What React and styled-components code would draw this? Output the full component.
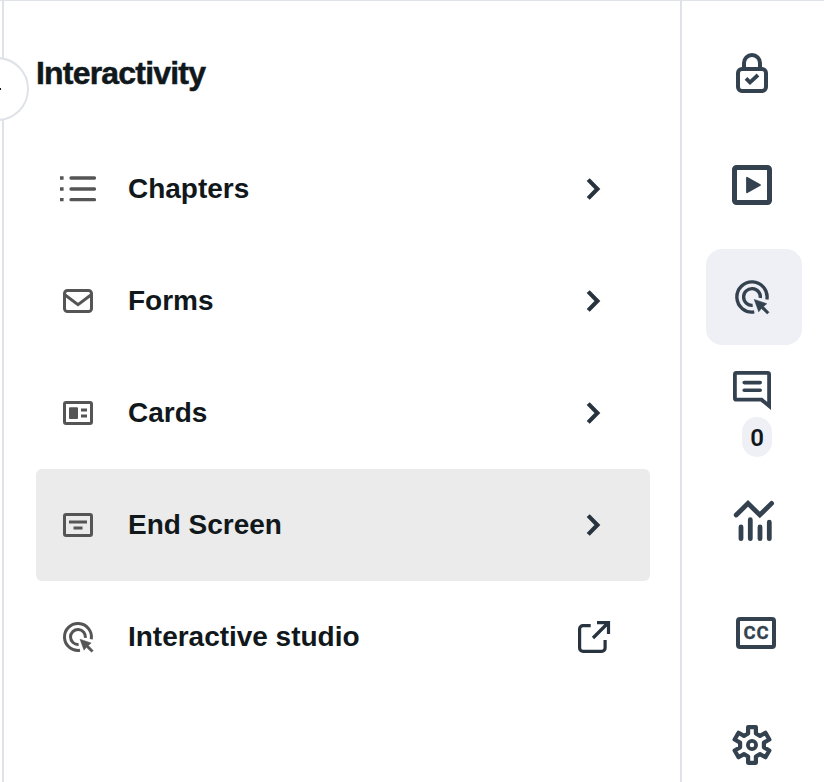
import React from "react";
import styled, { createGlobalStyle } from "styled-components";

const GlobalStyle = createGlobalStyle`
  * {
    box-sizing: border-box;
  }

  body {
    margin: 0;
    background-color: #ffffff;
    font-family: "Liberation Sans", Arial, sans-serif;
    color: #11181c;
  }
`;

const Container = styled.div`
  position: relative;
  width: 100vw;
  height: 100vh;
  padding-left: 2px;
  display: flex;
  overflow: hidden;
  border-top: 1px solid #dfe3e8;
  background-color: #ffffff;
`;

const Panel = styled.main`
  flex: 1;
  padding: 54px 30px 0 32px;
  border-left: 2px solid #dfe3e8;
  border-right: 2px solid #dfe3e8;
`;

const Title = styled.h1`
  height: 36px;
  margin: 0 0 42px;
  font-size: 32px;
  font-weight: 700;
  line-height: 36px;
  letter-spacing: -0.8px;
  -webkit-text-stroke: 0.5px #11181c;
`;

const Row = styled.div`
  height: 112px;
  padding: 0 32px 0 18px;
  display: flex;
  align-items: center;
  border-radius: 6px;
  cursor: pointer;
  background-color: ${(props) => (props.$active ? "#ebebeb" : "transparent")};
`;

const Label = styled.span`
  flex: 1;
  margin-left: 26px;
  font-size: 28px;
  font-weight: 700;
  line-height: 32px;
  letter-spacing: -0.02px;
`;

const Icon = styled.svg.attrs({ viewBox: "0 0 48 48", fill: "none" })`
  width: 48px;
  height: 48px;
  flex-shrink: 0;
  display: block;
  overflow: visible;
  color: ${(props) => props.$color || "#344250"};
  stroke: currentColor;
`;

const Sidebar = styled.nav`
  width: 142px;
  padding: 24px 22px 0 24px;
  display: flex;
  flex-direction: column;
  gap: 16px;
`;

const Tool = styled.div`
  height: 96px;
  padding: ${(props) => (props.$top ? "4px" : "24px")} 22px 0;
  flex-shrink: 0;
  border-radius: 16px;
  cursor: pointer;
  background-color: ${(props) => (props.$active ? "#eff0f5" : "transparent")};
`;

const Badge = styled.div`
  width: 30px;
  height: 40px;
  margin: 4px 0 0 14px;
  padding-top: 2px;
  display: flex;
  align-items: center;
  justify-content: center;
  border-radius: 15px;
  background-color: #eff0f5;
  font-family: Roboto, sans-serif;
  font-size: 24px;
  font-weight: 600;
`;

const CCText = styled.text`
  font-family: Roboto, sans-serif;
  font-size: 18.5px;
  font-weight: 700;
  fill: currentColor;
  stroke-width: 0.3px;
`;

// sits on top of the panel's left border
const Toggle = styled.div`
  position: absolute;
  top: 56px;
  left: -35px;
  width: 64px;
  height: 64px;
  display: flex;
  align-items: center;
  justify-content: center;
  border: 2px solid #dfe3e8;
  border-radius: 50%;
  background-color: #ffffff;
`;

const ToggleArrow = styled.svg`
  width: 12px;
  height: 12px;
  margin-left: -4px;
  overflow: visible;
`;

const gray = "#555555";

const ListIcon = () => (
  <Icon $color={gray} strokeWidth="3.3">
    <path d="M6 13h3.6M6 24h3.6M6 34.7h3.6" />
    <path d="M17 13h23.5M17 24h23.5M17 34.7h23.5" strokeLinecap="round" />
  </Icon>
);

const MailIcon = () => (
  <Icon $color={gray} strokeWidth="3">
    <rect x="10.5" y="13.5" width="27" height="21" rx="3" />
    <path d="M10.5 17.5L24 27.6l13.5-10.1" />
  </Icon>
);

const CardIcon = () => (
  <Icon $color={gray} strokeWidth="3">
    <rect x="10.5" y="13.5" width="27" height="21" rx="1.5" />
    <rect x="15" y="18.2" width="9" height="11.8" rx="1" fill="currentColor" stroke="none" />
    <path d="M27 21h6M27 27h6" strokeWidth="2.8" />
  </Icon>
);

const EndScreenIcon = () => (
  <Icon $color={gray} strokeWidth="3">
    <rect x="10.5" y="13.5" width="27" height="21" rx="1.5" />
    <path d="M15 21h18M19.5 27h9" strokeWidth="2.8" />
  </Icon>
);

const TargetIcon = ({ color, scale = 1 }) => (
  <Icon $color={color} strokeWidth="3">
    <g transform={`translate(24 24) scale(${scale})`}>
      <path d="M13.3 2.2A13.5 13.5 0 1 0 2 13.35" />
      <path d="M7.45 .9A7.5 7.5 0 1 0 .6 7.45" />
      <path d="M2 2.2L13.2 6L10.3 8.4L15.2 13.6L13.6 15.2L8.4 10.3L6 13.2Z" fill="currentColor" strokeWidth="0.5" />
    </g>
  </Icon>
);

const ChevronIcon = () => (
  <Icon $color="#27333e" strokeWidth="4.2">
    <path d="M18.2 14.6L27.4 24l-9.2 9.4" />
  </Icon>
);

const ExternalIcon = () => (
  <Icon $color="#27333e" strokeWidth="3.2">
    <path d="M20.7 12.6H13a3.4 3.4 0 0 0-3.4 3.4v19a3.4 3.4 0 0 0 3.4 3.4h18.7a3.4 3.4 0 0 0 3.4-3.4v-8" />
    <path d="M27 9.6h11.5V21M38 10L23 25" />
  </Icon>
);

const LockIcon = () => (
  <Icon strokeWidth="4">
    <rect x="10" y="20" width="28" height="22" rx="4" />
    <path d="M16 20v-6a8 8 0 0 1 16 0v6" />
    <path d="M18 29.4l4 4 8-7.4" strokeWidth="3.8" />
  </Icon>
);

const PlayIcon = () => (
  <Icon strokeWidth="5">
    <rect x="6.5" y="6.5" width="35" height="35" rx="2" />
    <path d="M19 16.7v14.6L32 24z" fill="currentColor" strokeWidth="1.8" strokeLinejoin="round" />
  </Icon>
);

const CommentIcon = () => (
  <Icon strokeWidth="3.8">
    <path d="M41.1 41V9.4a1.5 1.5 0 0 0-1.5-1.5H8.4a1.5 1.5 0 0 0-1.5 1.5v23.8a1.5 1.5 0 0 0 1.5 1.5h25.1z" />
    <path d="M16.2 17.6h16M16.2 25.2h16" strokeWidth="3.6" strokeLinecap="round" />
  </Icon>
);

const ChartIcon = () => (
  <Icon strokeWidth="4.8" strokeLinecap="round">
    <path d="M8.2 18L20 6.4 31.8 18 43.6 6.4" />
    <path d="M13 30v11.7M22.3 22.7v19M32 30v11.7M41.3 25.2v16.5" />
  </Icon>
);

const CaptionsIcon = () => (
  <Icon strokeWidth="4">
    <rect x="10" y="10" width="36" height="28" rx="2" />
    <CCText x="28" y="29.9" textAnchor="middle" textLength="25">
      CC
    </CCText>
  </Icon>
);

const GearIcon = () => {
  // one tooth, turned six times around the centre
  const tooth = [[-3.9, -11.5], [-3.9, -17.8], [3.9, -17.8], [3.9, -11.5]];
  const points = [0, 1, 2, 3, 4, 5].flatMap((i) => {
    const a = (i * Math.PI) / 3;
    return tooth.map(([x, y]) => [
      (24 + x * Math.cos(a) - y * Math.sin(a)).toFixed(2),
      (24 + x * Math.sin(a) + y * Math.cos(a)).toFixed(2),
    ].join(","));
  });

  return (
    <Icon strokeWidth="4.2" strokeLinejoin="round">
      <polygon points={points.join(" ")} />
      <circle cx="24" cy="24" r="4.1" strokeWidth="3.8" />
    </Icon>
  );
};

const items = [
  { label: "Chapters", icon: <ListIcon /> },
  { label: "Forms", icon: <MailIcon /> },
  { label: "Cards", icon: <CardIcon /> },
  { label: "End Screen", icon: <EndScreenIcon />, active: true },
  { label: "Interactive studio", icon: <TargetIcon color={gray} />, external: true },
];

const App = () => {
  return (
    <>
      <GlobalStyle />
      <Container>
        <Panel>
          <Title>Interactivity</Title>
          {items.map((item) => (
            <Row key={item.label} $active={item.active}>
              {item.icon}
              <Label>{item.label}</Label>
              {item.external ? <ExternalIcon /> : <ChevronIcon />}
            </Row>
          ))}
        </Panel>
        <Sidebar>
          <Tool>
            <LockIcon />
          </Tool>
          <Tool>
            <PlayIcon />
          </Tool>
          <Tool $active>
            <TargetIcon scale={1.12} />
          </Tool>
          <Tool $top>
            <CommentIcon />
            <Badge>0</Badge>
          </Tool>
          <Tool>
            <ChartIcon />
          </Tool>
          <Tool>
            <CaptionsIcon />
          </Tool>
          <Tool>
            <GearIcon />
          </Tool>
        </Sidebar>
        <Toggle>
          <ToggleArrow viewBox="0 0 12 12" fill="none" stroke="#11181c" strokeWidth="2">
            <path d="M4 1L-1 6l5 5M-1 6h13" />
          </ToggleArrow>
        </Toggle>
      </Container>
    </>
  );
};

export default App;
